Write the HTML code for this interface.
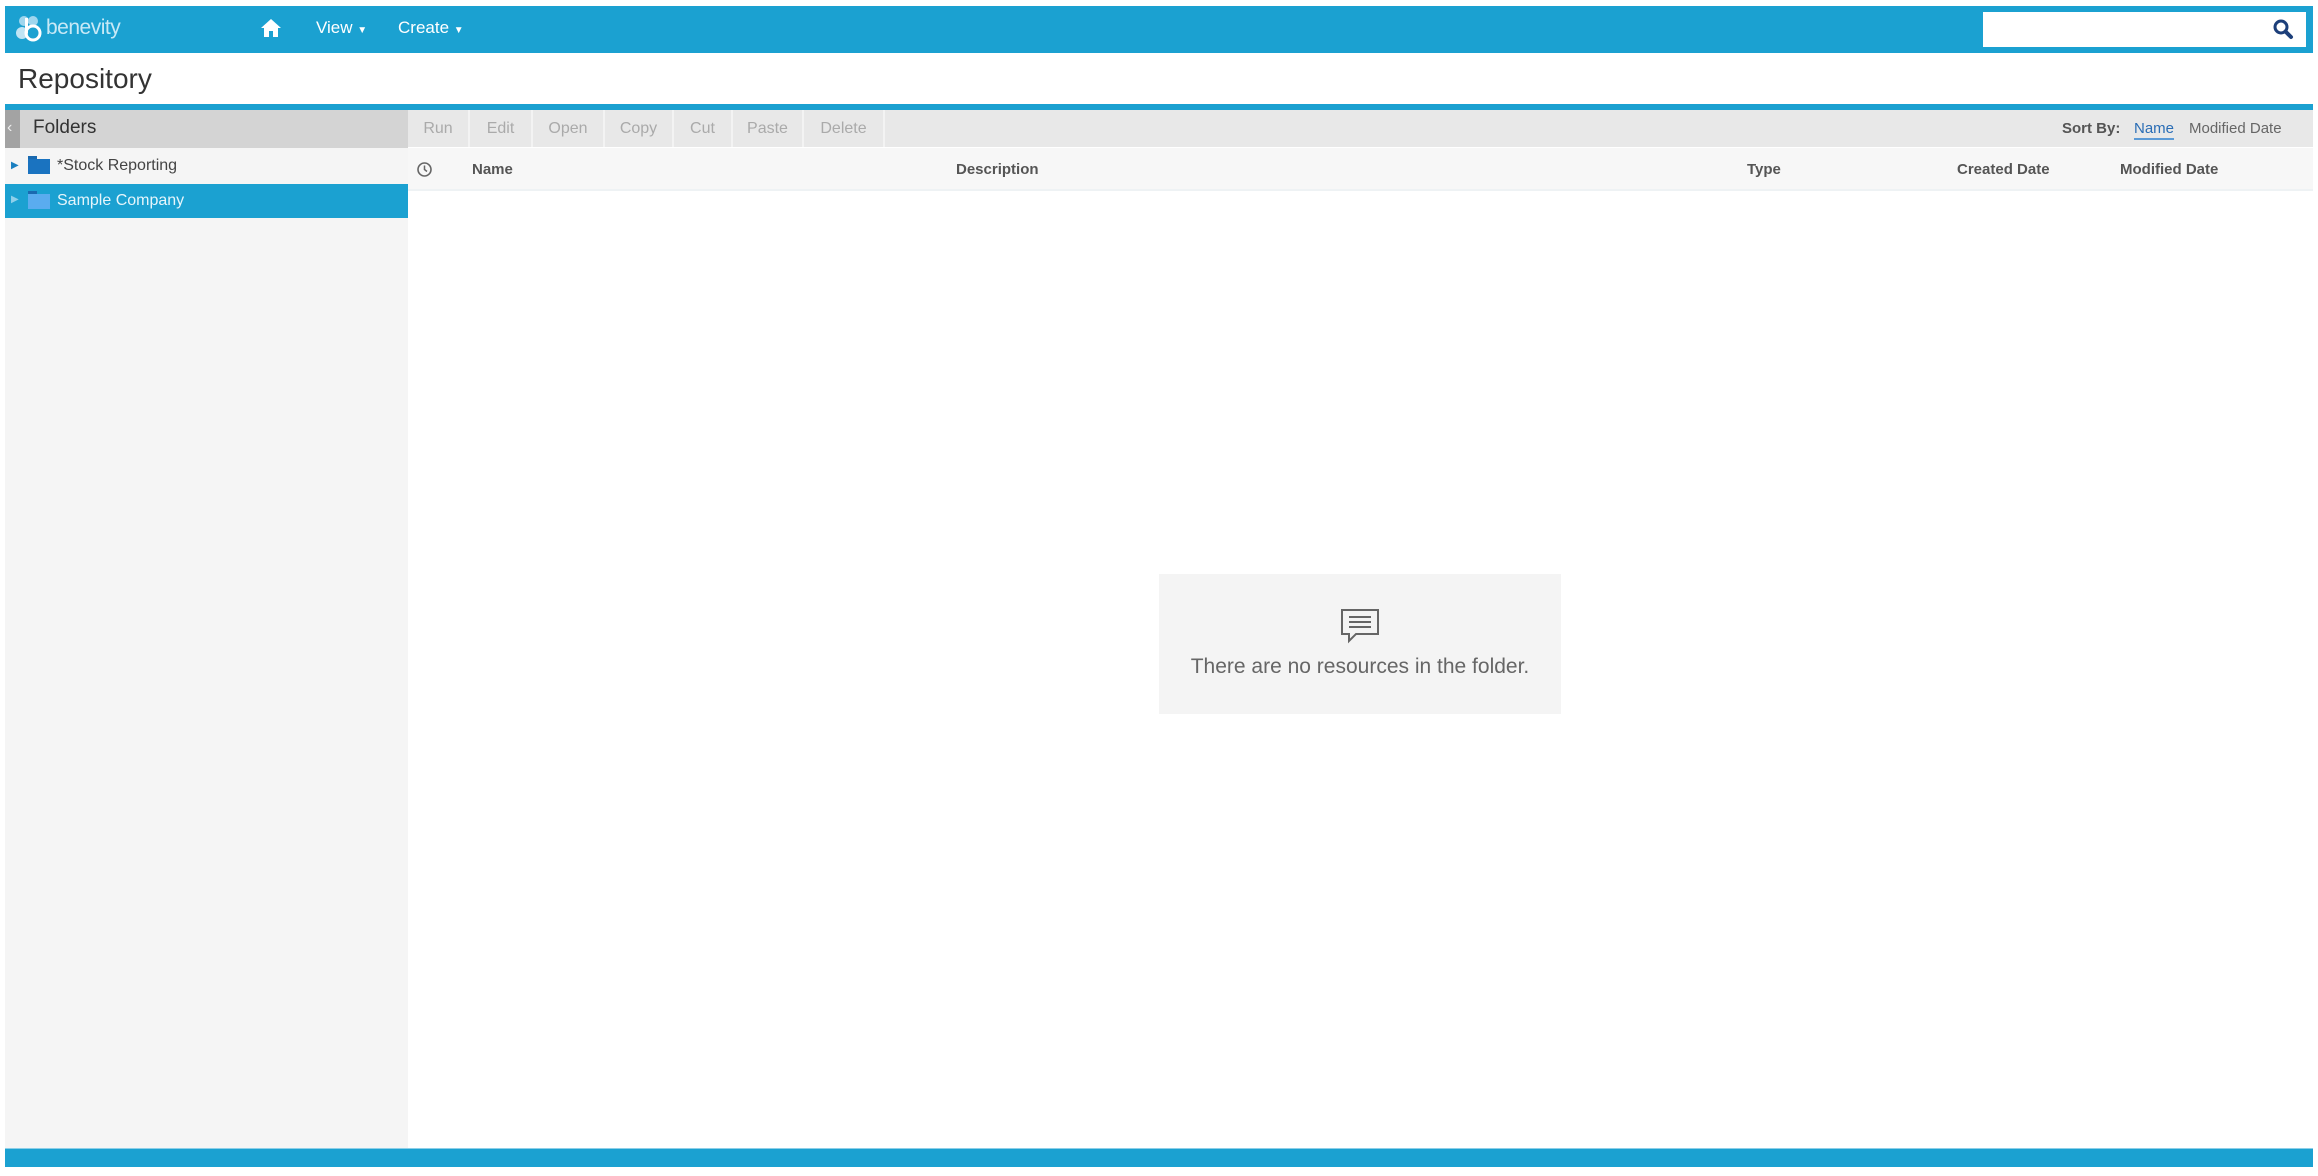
<!DOCTYPE html>
<html><head><meta charset="utf-8">
<style>
*{box-sizing:border-box;margin:0;padding:0}
body{width:2318px;height:1176px;background:#fff;font-family:"Liberation Sans",sans-serif;position:relative;overflow:hidden;color:#444}
.abs{position:absolute}
.nav{left:5px;top:6px;width:2308px;height:47px;background:#1ba1d1}
.navt{color:#fff;font-size:17px;top:18px}
.tb{top:110px;height:37px;background:#e8e8e8;left:408px;width:1905px}
.btn{position:absolute;top:0;height:37px;border-right:2px solid #f3f3f3;color:#aaa;font-size:16px;line-height:37px;text-align:center}
.hdr{top:148px;left:408px;width:1905px;height:43px;background:#f7f7f7;border-bottom:2px solid #eef2f4}
.h{position:absolute;top:13px;font-weight:bold;font-size:15px;color:#555}
</style></head><body>
<div class="abs nav"></div>
<svg class="abs" style="left:14px;top:14px" width="30" height="30" viewBox="0 0 30 30">
<circle cx="10" cy="7" r="5" fill="#9fd6ee"/><circle cx="19" cy="7" r="5" fill="#9fd6ee"/>
<circle cx="8" cy="19" r="6" fill="#bfe4f4"/><circle cx="19" cy="19" r="7" fill="none" stroke="#fff" stroke-width="3"/>
<rect x="11" y="4" width="3" height="15" fill="#fff"/></svg>
<div class="abs" style="left:46px;top:16px;color:#c8e9f6;font-size:21px;letter-spacing:-0.5px">benevity</div>
<svg class="abs" style="left:260px;top:18px" width="22" height="20" viewBox="0 0 22 20"><path d="M11 1 L21 10 H18 V19 H13 V13 H9 V19 H4 V10 H1 Z" fill="#fff"/></svg>
<div class="abs navt" style="left:316px">View <span style="font-size:10px">▼</span></div>
<div class="abs navt" style="left:398px">Create <span style="font-size:10px">▼</span></div>
<div class="abs" style="left:1983px;top:12px;width:323px;height:35px;background:#fff"></div>
<svg class="abs" style="left:2272px;top:18px" width="22" height="22" viewBox="0 0 22 22"><circle cx="9" cy="9" r="6" fill="none" stroke="#1d3f7a" stroke-width="3"/><path d="M13.5 13.5 L19 19" stroke="#1d3f7a" stroke-width="4" stroke-linecap="round"/></svg>
<div class="abs" style="left:18px;top:63px;font-size:28px;color:#333">Repository</div>
<div class="abs" style="left:5px;top:104px;width:2308px;height:6px;background:#1ba1d1"></div>
<div class="abs" style="left:5px;top:110px;width:403px;height:1038px;background:#f5f5f5"></div>
<div class="abs" style="left:5px;top:110px;width:403px;height:38px;background:#d4d4d4"></div>
<div class="abs" style="left:5px;top:110px;width:15px;height:38px;background:#a3a3a3;color:#eee;font-size:16px;line-height:36px;padding-left:2px">‹</div>
<div class="abs" style="left:33px;top:117px;font-size:19px;color:#333">Folders</div>
<div class="abs" style="left:11px;top:160px;color:#1a7fc0;font-size:10px">▶</div>
<svg class="abs" style="left:28px;top:156px" width="22" height="18"><rect x="0" y="0" width="9" height="4" fill="#1a6ab0"/><rect x="0" y="3" width="22" height="15" fill="#1a73c0"/></svg>
<div class="abs" style="left:57px;top:157px;font-size:16px;color:#444">*Stock Reporting</div>
<div class="abs" style="left:5px;top:184px;width:403px;height:34px;background:#1ba1d1"></div>
<div class="abs" style="left:11px;top:194px;color:#8fd0ea;font-size:10px">▶</div>
<svg class="abs" style="left:28px;top:191px" width="22" height="18"><rect x="0" y="0" width="9" height="4" fill="#1a6ab0"/><rect x="0" y="3" width="22" height="15" fill="#5aacef"/></svg>
<div class="abs" style="left:57px;top:192px;font-size:16px;color:#e6f5fb">Sample Company</div>
<div class="abs tb">
<div class="btn" style="left:0;width:62px">Run</div>
<div class="btn" style="left:62px;width:63px">Edit</div>
<div class="btn" style="left:125px;width:72px">Open</div>
<div class="btn" style="left:197px;width:69px">Copy</div>
<div class="btn" style="left:266px;width:59px">Cut</div>
<div class="btn" style="left:325px;width:71px">Paste</div>
<div class="btn" style="left:396px;width:81px">Delete</div>
<div style="position:absolute;left:1654px;top:10px;font-size:15px;font-weight:bold;color:#555">Sort By:</div>
<div style="position:absolute;left:1726px;top:10px;font-size:15px;color:#2a6db5;border-bottom:2px solid #5b9ad6;padding-bottom:1px">Name</div>
<div style="position:absolute;left:1781px;top:10px;font-size:15px;color:#666">Modified Date</div>
</div>
<div class="abs hdr">
<svg style="position:absolute;left:8px;top:13px" width="17" height="17"><circle cx="8.5" cy="8.5" r="6.5" fill="none" stroke="#666" stroke-width="1.6"/><path d="M8.5 4.5 V8.5 L11 10.5" fill="none" stroke="#666" stroke-width="1.5"/></svg>
<div class="h" style="left:64px">Name</div>
<div class="h" style="left:548px">Description</div>
<div class="h" style="left:1339px">Type</div>
<div class="h" style="left:1549px">Created Date</div>
<div class="h" style="left:1712px">Modified Date</div>
</div>
<div class="abs" style="left:1159px;top:574px;width:402px;height:140px;background:#f4f4f4"></div>
<svg class="abs" style="left:1340px;top:608px" width="40" height="38" viewBox="0 0 40 38"><path d="M2 2 H38 V26 H16 L9 33 V26 H2 Z" fill="none" stroke="#666" stroke-width="2"/><path d="M9 9 H31 M9 14 H31 M9 19 H31" stroke="#666" stroke-width="2"/></svg>
<div class="abs" style="left:1159px;top:655px;width:402px;text-align:center;font-size:21px;color:#666">There are no resources in the folder.</div>
<div class="abs" style="left:5px;top:1148px;width:2308px;height:19px;background:#1ba1d1;border-top:1px solid #8ccfe8"></div>
</body></html>
